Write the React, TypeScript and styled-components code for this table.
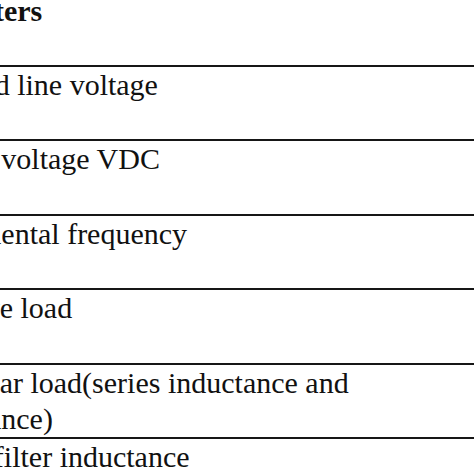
import React from "react";
import styled, { createGlobalStyle } from "styled-components";

const GlobalStyle = createGlobalStyle`
  html, body {
    margin: 0;
    padding: 0;
    background: #ffffff;
    overflow: hidden;
  }
  body {
    width: 474px;
    height: 474px;
    font-family: "Liberation Serif", "Times New Roman", serif;
    color: #111111;
  }
`;

const rows = [
  { name: "Standard line voltage", value: "380 V" },
  { name: "DC bus voltage VDC", value: "700 V" },
  { name: "Fundamental frequency", value: "50 Hz" },
  { name: "Resistive load", value: "20 Ω" },
  {
    name: "Nonlinear load(series inductance and capacitance)",
    value: "2 mH, 10 Ω",
  },
  { name: "Output filter inductance", value: "3 mH" },
];

export default function App() {
  return (
    <>
      <GlobalStyle />
      <Page>
        <Table>
          <HeadRow>
            <HeadCell>Parameters</HeadCell>
            <HeadCell>Value</HeadCell>
          </HeadRow>
          {rows.map((row) => (
            <Row key={row.name}>
              <NameCell>{row.name}</NameCell>
              <ValueCell>{row.value}</ValueCell>
            </Row>
          ))}
        </Table>
      </Page>
    </>
  );
}

const Page = styled.div`
  width: 474px;
  height: 474px;
  overflow: hidden;
`;

const Table = styled.div`
  width: 900px;
  margin-left: -97px;
  margin-top: -7px;
  display: flex;
  flex-direction: column;
`;

const HeadRow = styled.div`
  display: grid;
  grid-template-columns: 660px 1fr;
  height: 72px;
`;

const HeadCell = styled.div`
  font-size: 30px;
  line-height: 36px;
  font-weight: 700;
  text-indent: -9px;
`;

const Row = styled.div`
  display: grid;
  grid-template-columns: 660px 1fr;
  height: 72.4px;
  border-top: 2.2px solid #161616;
`;

const NameCell = styled.div`
  font-size: 30px;
  line-height: 36px;
  padding-right: 140px;
`;

const ValueCell = styled.div`
  font-size: 30px;
  line-height: 36px;
`;
